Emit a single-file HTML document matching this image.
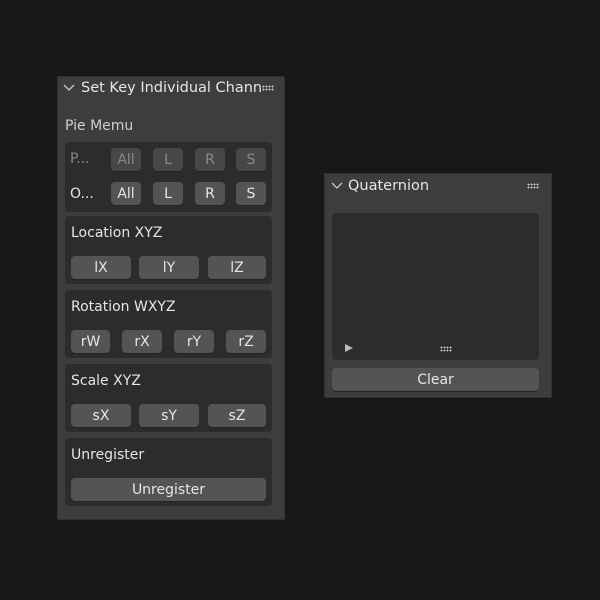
<!DOCTYPE html>
<html><head><style>
*{margin:0;padding:0;box-sizing:border-box}
body{width:600px;height:600px;background:#181818;font-family:"DejaVu Sans","Liberation Sans",sans-serif;font-size:14px;color:#e6e6e6;position:relative;overflow:hidden}
.a{position:absolute}
.panel{background:#3d3d3d;border:1px solid #303030}
.box{background:#2c2c2c;border-radius:4px}
.btn{position:absolute;background:#545454;border-radius:4px;text-align:center;line-height:24px;height:23px;color:#e6e6e6;box-shadow:0 1px 0 #232323}
.dis{background:#474747;color:#8a8a8a}
.t{position:absolute;white-space:nowrap}
.dots{position:absolute;width:12px;height:6px;background-image:radial-gradient(circle,#ccc 0.9px,transparent 1px);background-size:3px 3px}
</style></head><body>
<div class="a panel" style="left:57px;top:76px;width:228px;height:444px"></div>
<svg class="a" style="left:63px;top:83px" width="12" height="10"><path d="M1 2 L6 7 L11 2" stroke="#ccc" stroke-width="1.3" fill="none"/></svg>
<div class="t" style="left:81px;top:80px;font-size:14.5px;width:180px;overflow:hidden">Set Key Individual Channels</div>
<div class="dots" style="left:262px;top:85px"></div>
<div class="t" style="left:65px;top:118px;color:#cfcfcf">Pie Memu</div>
<div class="a box" style="left:65px;top:142px;width:207px;height:70px"></div>
<div class="t" style="left:70px;top:151px;color:#8a8a8a">P...</div>
<div class="btn dis" style="left:111px;top:148px;width:30px">All</div>
<div class="btn dis" style="left:153px;top:148px;width:30px">L</div>
<div class="btn dis" style="left:195px;top:148px;width:30px">R</div>
<div class="btn dis" style="left:236px;top:148px;width:30px">S</div>
<div class="t" style="left:70px;top:186px">O...</div>
<div class="btn" style="left:111px;top:182px;width:30px">All</div>
<div class="btn" style="left:153px;top:182px;width:30px">L</div>
<div class="btn" style="left:195px;top:182px;width:30px">R</div>
<div class="btn" style="left:236px;top:182px;width:30px">S</div>

<div class="a box" style="left:65px;top:216px;width:207px;height:68px"></div>
<div class="t" style="left:71px;top:225px">Location XYZ</div>
<div class="btn" style="left:71px;top:256px;width:60px">lX</div>
<div class="btn" style="left:139px;top:256px;width:60px">lY</div>
<div class="btn" style="left:208px;top:256px;width:58px">lZ</div>

<div class="a box" style="left:65px;top:290px;width:207px;height:68px"></div>
<div class="t" style="left:71px;top:299px">Rotation WXYZ</div>
<div class="btn" style="left:71px;top:330px;width:39px">rW</div>
<div class="btn" style="left:122px;top:330px;width:40px">rX</div>
<div class="btn" style="left:174px;top:330px;width:40px">rY</div>
<div class="btn" style="left:226px;top:330px;width:40px">rZ</div>

<div class="a box" style="left:65px;top:364px;width:207px;height:68px"></div>
<div class="t" style="left:71px;top:373px">Scale XYZ</div>
<div class="btn" style="left:71px;top:404px;width:60px">sX</div>
<div class="btn" style="left:139px;top:404px;width:60px">sY</div>
<div class="btn" style="left:208px;top:404px;width:58px">sZ</div>

<div class="a box" style="left:65px;top:438px;width:207px;height:68px"></div>
<div class="t" style="left:71px;top:447px">Unregister</div>
<div class="btn" style="left:71px;top:478px;width:195px">Unregister</div>

<div class="a panel" style="left:324px;top:173px;width:228px;height:225px"></div>
<svg class="a" style="left:331px;top:181px" width="12" height="10"><path d="M1 2 L6 7 L11 2" stroke="#ccc" stroke-width="1.3" fill="none"/></svg>
<div class="t" style="left:348px;top:178px;font-size:14.5px">Quaternion</div>
<div class="dots" style="left:527px;top:183px"></div>
<div class="a box" style="left:332px;top:213px;width:207px;height:147px"></div>
<svg class="a" style="left:345px;top:344px" width="10" height="8"><path d="M0 0 L8 4 L0 8Z" fill="#bbb"/></svg>
<div class="dots" style="left:440px;top:346px"></div>
<div class="btn" style="left:332px;top:368px;width:207px">Clear</div>
</body></html>
